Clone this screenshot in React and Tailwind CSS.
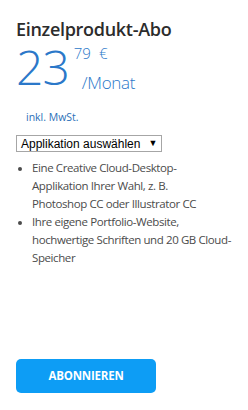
export default function App() {
  return (
    <div className="w-[248px] h-[410px] bg-white overflow-hidden" style={{ fontFamily: '"Open Sans", sans-serif' }}>
      <div className="pl-4 pt-[18px]">
        <h1 className="text-[18px] leading-[22px] font-semibold text-[#2c2c2c] tracking-[-0.3px]">Einzelprodukt-Abo</h1>
        <div className="flex items-start text-[#2b78c9] mt-[4px]">
          <span className="text-[48px] leading-[46px] font-light tracking-[-1px]">23</span>
          <div className="flex flex-col ml-[5px]">
            <div className="flex gap-[8px] text-[15px] leading-[16px] font-light mt-[1px]">
              <span>79</span>
              <span>€</span>
            </div>
            <span className="text-[17px] leading-[20px] font-light mt-[12px] ml-[8px] tracking-[-0.3px]">/Monat</span>
          </div>
        </div>
        <p className="text-[10.5px] leading-[14px] text-[#2b6fb8] ml-[10px] mt-[17px]">inkl. MwSt.</p>
        <div className="mt-[11px] inline-flex h-[17px] border border-[#a6a6a6] items-center pl-[4px] pr-[4px] text-[12px] text-black whitespace-nowrap" style={{ fontFamily: '"Liberation Sans", Arial, sans-serif' }}>
          <span>Applikation auswählen</span>
          <span className="ml-[8px] text-[9px]">▼</span>
        </div>
        <ul className="mt-[5px] text-[11.5px] leading-[18px] text-[#4b4b4b] tracking-[-0.4px]">
          <li className="flex">
            <span className="w-[16px] shrink-0 flex pt-[8px] pl-[2px]"><span className="w-[4px] h-[4px] rounded-full bg-[#4b4b4b]"></span></span>
            <span>Eine Creative Cloud-Desktop-<br />Applikation Ihrer Wahl, z. B.<br />Photoshop CC oder Illustrator CC</span>
          </li>
          <li className="flex">
            <span className="w-[16px] shrink-0 flex pt-[8px] pl-[2px]"><span className="w-[4px] h-[4px] rounded-full bg-[#4b4b4b]"></span></span>
            <span>Ihre eigene Portfolio-Website,<br />hochwertige Schriften und 20 GB Cloud-<br />Speicher</span>
          </li>
        </ul>
        <button className="block mt-[92px] w-[140px] h-[34px] rounded-[5px] bg-[#0d9df5] text-white text-[11.5px] font-bold tracking-[-0.2px]">ABONNIEREN</button>
      </div>
    </div>
  );
}
